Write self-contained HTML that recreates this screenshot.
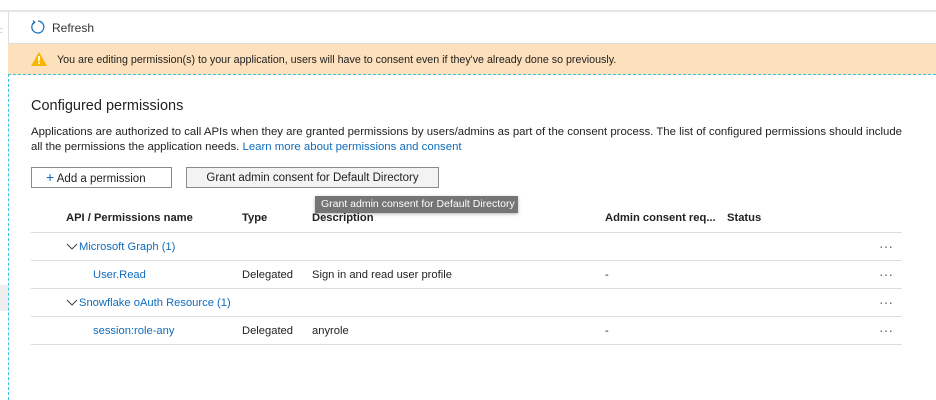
<!DOCTYPE html>
<html><head><meta charset="utf-8"><style>
*{margin:0;padding:0;box-sizing:border-box}
body{width:936px;height:400px;background:#fff;font-family:"Liberation Sans",sans-serif;color:#222;position:relative;overflow:hidden;font-size:11.2px}
.abs{position:absolute;white-space:nowrap}
.lnk{color:#0f6cbd;text-decoration:none}
.hl{position:absolute;left:31px;width:871px;height:1px;background:#ddd}
.dots{position:absolute;left:879px;font-size:14px;line-height:10px;color:#666;letter-spacing:0px}
.th{font-weight:bold;font-size:11.2px;color:#222}
</style></head><body>
<div class="abs" style="left:0;top:10px;width:936px;height:2px;background:#e6e6e6"></div>
<div class="abs" style="left:8px;top:12px;width:1px;height:32px;background:#ddd"></div>
<div class="abs" style="left:0;top:25px;font-size:9px;color:#888">:</div>
<svg class="abs" style="left:30px;top:19px" width="16" height="16" viewBox="0 0 16 16"><path d="M4.5 3A6 6 0 1 0 8 2" fill="none" stroke="#0f6cbd" stroke-width="1.2"/><path d="M3 1.5l1.8 1.8-1.8 1.8" fill="none" stroke="#0f6cbd" stroke-width="1.1"/></svg>
<div class="abs" style="left:52px;top:21px;font-size:12px;color:#333">Refresh</div>
<div class="abs" style="left:8px;top:43px;width:928px;height:32px;background:#fde0bc;border-top:1px solid #ddd"></div>
<svg class="abs" style="left:30px;top:51px" width="18" height="16" viewBox="0 0 18 16"><path d="M9 1L17 15H1Z" fill="#f5b700"/><rect x="8.2" y="5" width="1.6" height="5.5" fill="#fff"/><rect x="8.2" y="11.5" width="1.6" height="1.6" fill="#fff"/></svg>
<div class="abs" style="left:57px;top:54px;font-size:10.7px;color:#222">You are editing permission(s) to your application, users will have to consent even if they've already done so previously.</div>
<div class="abs" style="left:8px;top:74px;width:928px;height:0;border-top:1px dashed #3cc2e0"></div>
<div class="abs" style="left:8px;top:74px;width:0;height:326px;border-left:1px dashed #3cc2e0"></div>
<div class="abs" style="left:0;top:285px;width:8px;height:26px;background:#eee"></div>
<div class="abs" style="left:31px;top:98px;font-size:14.5px;color:#222">Configured permissions</div>
<div class="abs" style="left:31px;top:125px;font-size:11.4px;line-height:15px;color:#222">Applications are authorized to call APIs when they are granted permissions by users/admins as part of the consent process. The list of configured permissions should include<br>all the permissions the application needs. <span class="lnk">Learn more about permissions and consent</span></div>
<div class="abs" style="left:31px;top:167px;width:141px;height:21px;border:1px solid #8a8a8a;background:#fff;font-size:11.5px;padding:3px 0 0 14px"><span style="color:#0f6cbd;font-size:14px;line-height:12px">+</span> Add a permission</div>
<div class="abs" style="left:186px;top:167px;width:253px;height:21px;border:1px solid #8a8a8a;background:#f3f3f3;font-size:11.5px;text-align:center;padding-top:4px">Grant admin consent for Default Directory</div>
<div class="abs th" style="left:66px;top:212px">API / Permissions name</div>
<div class="abs th" style="left:242px;top:212px">Type</div>
<div class="abs th" style="left:312px;top:212px">Description</div>
<div class="abs th" style="left:605px;top:212px">Admin consent req...</div>
<div class="abs th" style="left:727px;top:212px">Status</div>
<div class="hl" style="top:232px"></div>
<div class="hl" style="top:260px"></div>
<div class="hl" style="top:288px"></div>
<div class="hl" style="top:316px"></div>
<div class="hl" style="top:344px"></div>
<svg class="abs" style="left:66px;top:243px" width="12" height="7"><path d="M1 1l5 5 5-5" fill="none" stroke="#444" stroke-width="1"/></svg>
<div class="abs lnk" style="left:79px;top:241px">Microsoft Graph (1)</div>
<div class="abs lnk" style="left:93px;top:269px">User.Read</div>
<div class="abs" style="left:242px;top:269px">Delegated</div>
<div class="abs" style="left:312px;top:269px">Sign in and read user profile</div>
<div class="abs" style="left:605px;top:269px">-</div>
<svg class="abs" style="left:66px;top:299px" width="12" height="7"><path d="M1 1l5 5 5-5" fill="none" stroke="#444" stroke-width="1"/></svg>
<div class="abs lnk" style="left:79px;top:297px">Snowflake oAuth Resource (1)</div>
<div class="abs lnk" style="left:93px;top:325px">session:role-any</div>
<div class="abs" style="left:242px;top:325px">Delegated</div>
<div class="abs" style="left:312px;top:325px">anyrole</div>
<div class="abs" style="left:605px;top:325px">-</div>
<div class="dots" style="top:241px">&middot;&middot;&middot;</div>
<div class="dots" style="top:269px">&middot;&middot;&middot;</div>
<div class="dots" style="top:297px">&middot;&middot;&middot;</div>
<div class="dots" style="top:325px">&middot;&middot;&middot;</div>
<div class="abs" style="left:315px;top:196px;width:203px;height:17px;background:#757575;color:#fff;font-size:10.5px;padding:2px 0 0 6px;box-shadow:0 1px 3px rgba(0,0,0,.3)">Grant admin consent for Default Directory</div>
</body></html>
